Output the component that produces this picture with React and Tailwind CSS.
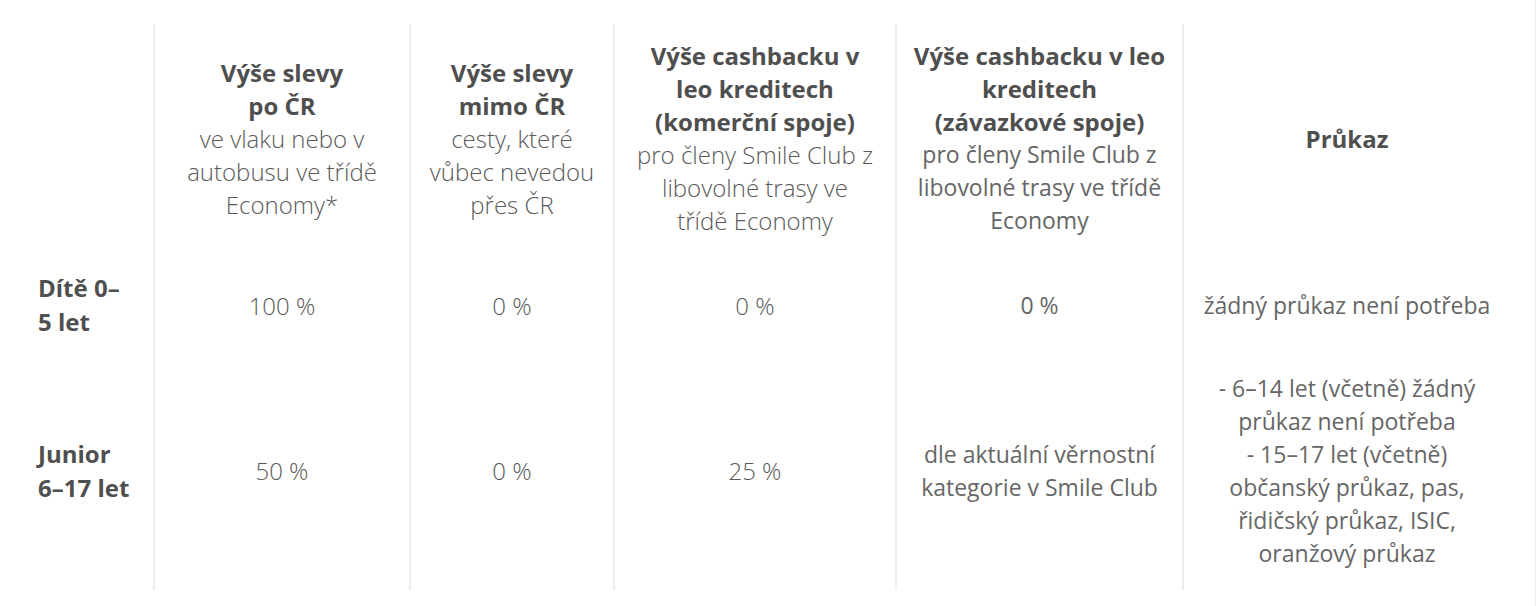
import React from 'react';

const headers = [
  {
    bold: ['Výše slevy', 'po ČR'],
    text: ['ve vlaku nebo v', 'autobusu ve třídě', 'Economy*'],
  },
  {
    bold: ['Výše slevy', 'mimo ČR'],
    text: ['cesty, které', 'vůbec nevedou', 'přes ČR'],
  },
  {
    bold: ['Výše cashbacku v', 'leo kreditech', '(komerční spoje)'],
    text: ['pro členy Smile Club z', 'libovolné trasy ve', 'třídě Economy'],
  },
  {
    bold: ['Výše cashbacku v leo', 'kreditech', '(závazkové spoje)'],
    text: ['pro členy Smile Club z', 'libovolné trasy ve třídě', 'Economy'],
  },
  { bold: ['Průkaz'], text: [] },
];

const rows = [
  {
    label: ['Dítě 0–', '5 let'],
    cells: [['100 %'], ['0 %'], ['0 %'], ['0 %'], ['žádný průkaz není potřeba']],
  },
  {
    label: ['Junior', '6–17 let'],
    cells: [
      ['50 %'],
      ['0 %'],
      ['25 %'],
      ['dle aktuální věrnostní', 'kategorie v Smile Club'],
      [
        '- 6–14 let (včetně) žádný',
        'průkaz není potřeba',
        '- 15–17 let (včetně)',
        'občanský průkaz, pas,',
        'řidičský průkaz, ISIC,',
        'oranžový průkaz',
      ],
    ],
  },
];

const Lines = ({ lines, className }) =>
  lines.map((l, i) => (
    <span key={i} className={`block whitespace-nowrap ${className}`}>
      {l}
    </span>
  ));

const Cell = ({ children, extra = '' }) => (
  <div className={`flex flex-col items-center justify-center text-center border-l-2 border-[#ededed] ${extra}`}>
    {children}
  </div>
);

export default function App() {
  // lighter, wider text for the first three data columns, like the original page
  const weightFor = (i) =>
    i < 3 ? 'font-light text-[24px] text-[#5a5a5a]' : 'font-normal text-[23px] text-[#666]';

  return (
    <div
      className="min-h-[606px] w-full bg-white border-r border-[#f1f1f1] pt-[24px] text-[24px] leading-[33px]"
      style={{ fontFamily: '"Open Sans", "Noto Sans", sans-serif' }}
    >
      <div className="grid grid-cols-[153px_256px_204px_282px_287px_328px] grid-rows-[228px_106px_232px]">
        {/* header row */}
        <div />
        {headers.map((h, i) => (
          <Cell key={i}>
            <Lines lines={h.bold} className="font-bold text-[#4f4f4f]" />
            <Lines lines={h.text} className={weightFor(i)} />
          </Cell>
        ))}

        {rows.map((r, ri) => (
          <React.Fragment key={ri}>
            <div className={`flex flex-col justify-center pl-[38px] ${ri === 1 ? 'pb-[7px]' : ''}`}>
              <Lines lines={r.label} className="font-bold text-[#4f4f4f] leading-[34px]" />
            </div>
            {r.cells.map((c, ci) => (
              <Cell key={ci} extra={ri === 1 ? 'pb-[7px]' : ''}>
                <Lines lines={c} className={weightFor(ci)} />
              </Cell>
            ))}
          </React.Fragment>
        ))}
      </div>
    </div>
  );
}
